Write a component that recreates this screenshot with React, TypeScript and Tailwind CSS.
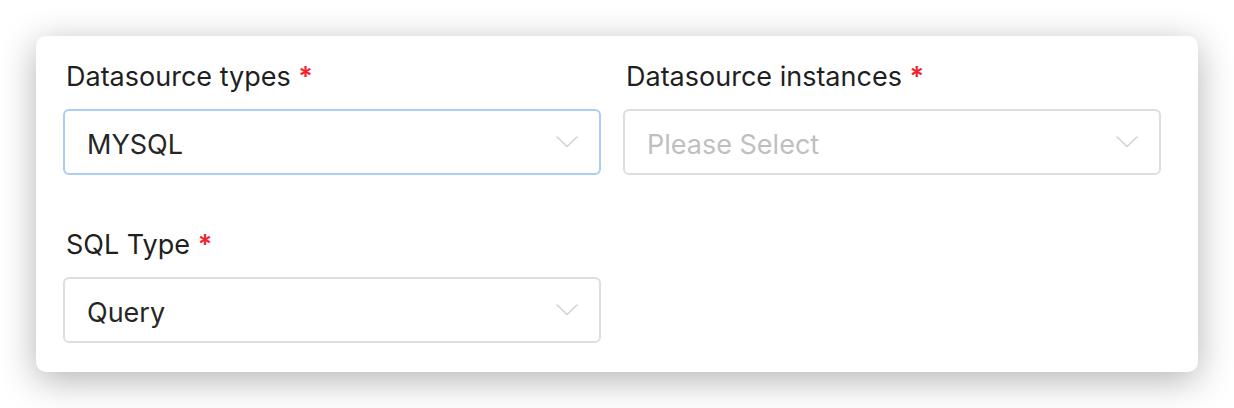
interface FieldProps {
  label: string;
  value?: string;
  placeholder?: string;
  focused?: boolean;
}

function Chevron() {
  return (
    <svg width="22" height="12" viewBox="0 0 22 12" fill="none" className="shrink-0">
      <polyline points="1,1 11,10.5 21,1" stroke="#d2d2d6" strokeWidth="1.6" strokeLinecap="round" strokeLinejoin="round" />
    </svg>
  );
}

function Field({ label, value, placeholder, focused = false }: FieldProps) {
  return (
    <div className="flex flex-col">
      <label className="h-[32px] pl-[3px] pt-[2px] text-[27px] leading-[32px] text-[#1f1f1f] whitespace-nowrap">
        {label} <span className="text-[#f5222d] font-semibold">*</span>
      </label>
      <div
        className={`mt-[18px] h-[66px] rounded-[6px] border-2 bg-white flex items-center pl-[22px] pr-[21px] ${
          focused ? 'border-[#a9cdf3]' : 'border-[#dddde2]'
        }`}
      >
        <span className={`flex-1 text-[27px] leading-[32px] pt-[5px] ${value ? 'text-[#262626]' : 'text-[#bfbfbf]'}`}>
          {value ?? placeholder}
        </span>
        <Chevron />
      </div>
    </div>
  );
}

export default function App() {
  return (
    <div className="w-[1234px] h-[408px] bg-white p-[36px] font-['Inter','Liberation_Sans',sans-serif]">
      <div className="w-[1162px] h-[336px] bg-white rounded-[10px] shadow-[0_8px_36px_rgba(0,0,0,0.3)] px-[27px] pt-[23px]">
        <div className="grid grid-cols-[538px_538px] gap-x-[22px] gap-y-[52px]">
          <Field label="Datasource types" value="MYSQL" focused />
          <Field label="Datasource instances" placeholder="Please Select" />
          <Field label="SQL Type" value="Query" />
        </div>
      </div>
    </div>
  );
}
